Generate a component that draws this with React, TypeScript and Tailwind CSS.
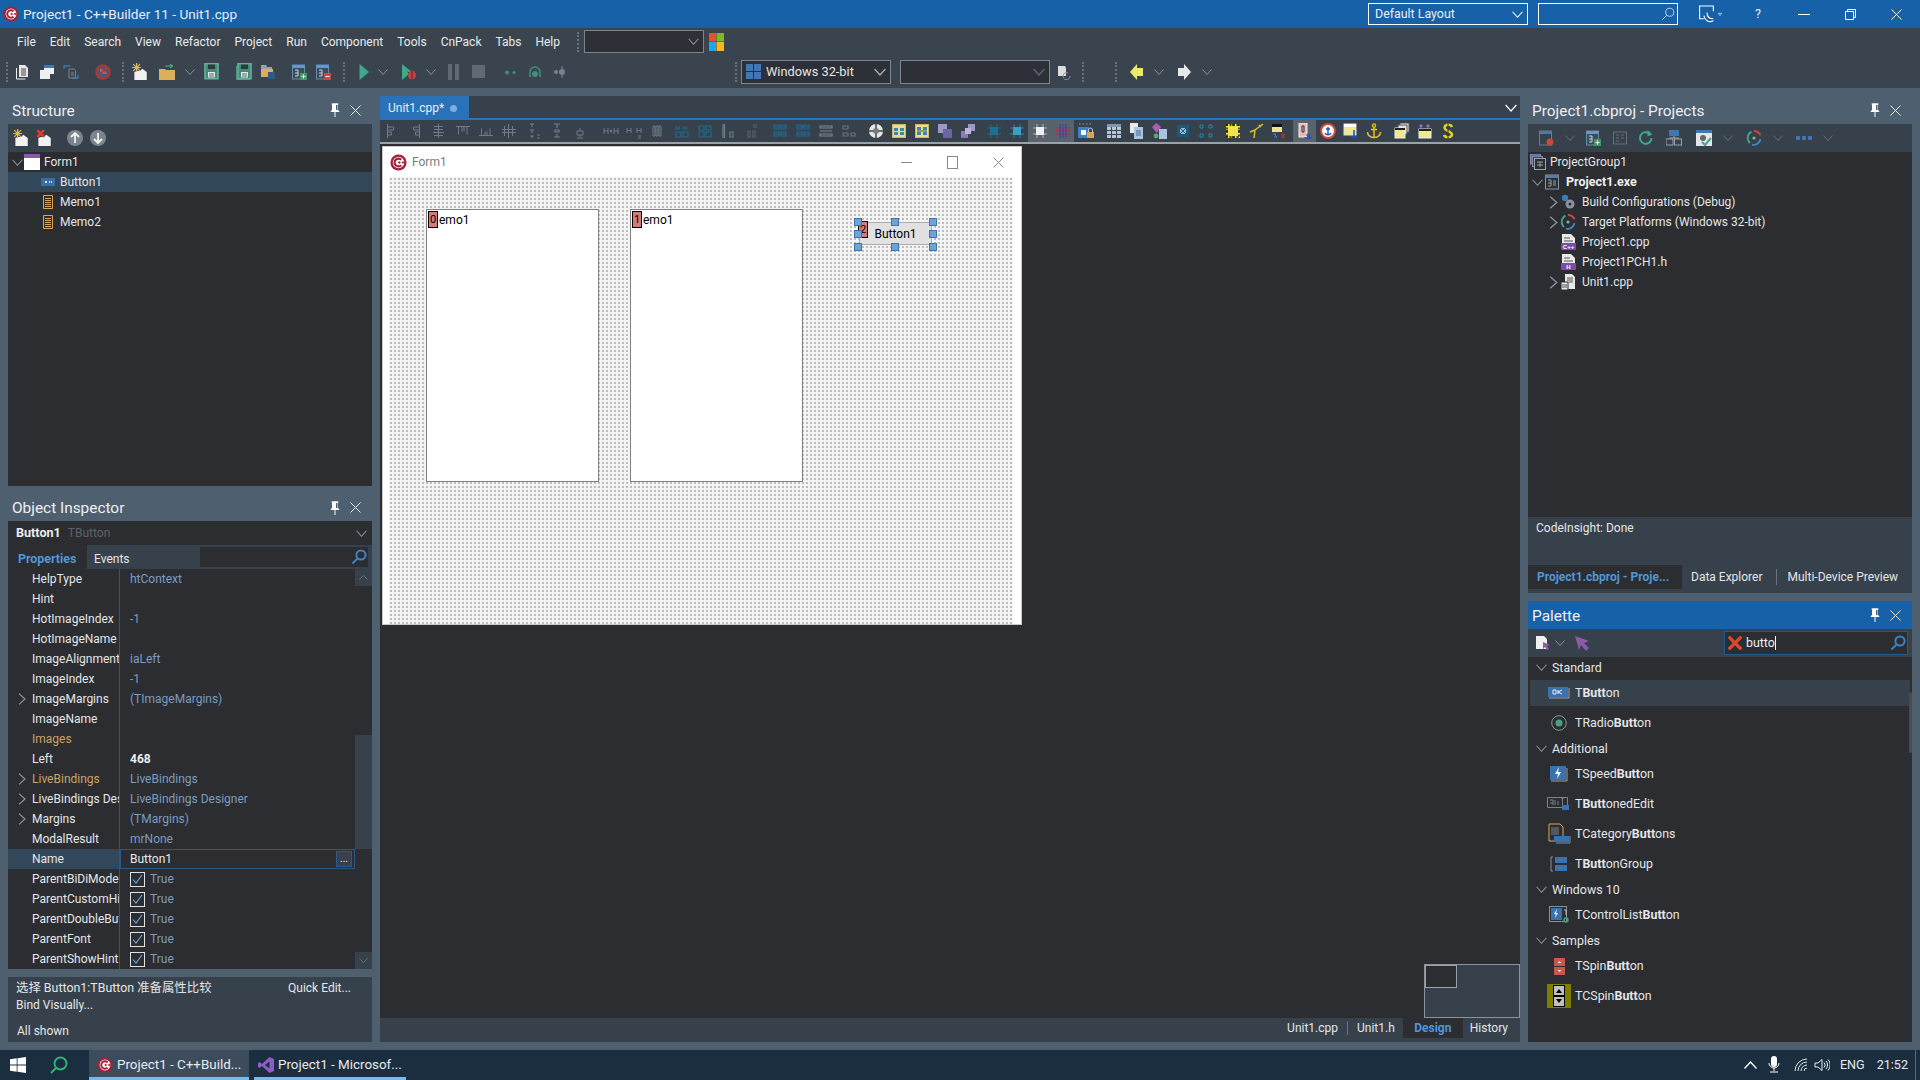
import React from "react";

type P = { children?: React.ReactNode; s?: number; c?: string };
const I = ({ children, s = 16 }: P) => (
  <svg width={s} height={s} viewBox="0 0 16 16" fill="none" className="shrink-0 block">
    {children}
  </svg>
);
const L = ({ d, c = "#76838f", w = 1 }: { d: string; c?: string; w?: number }) => (
  <I>
    <path d={d} stroke={c} strokeWidth={w} />
  </I>
);
const Chev = ({ dir = "down", c = "#8b95a0", s = 10 }: { dir?: "down" | "right" | "up"; c?: string; s?: number }) => (
  <svg width={s} height={s} viewBox="0 0 10 10" fill="none" className="shrink-0 block">
    <path d={dir === "down" ? "M0.5 2.5 5 7.5 9.5 2.5" : dir === "up" ? "M0.5 7.5 5 2.5 9.5 7.5" : "M2.5 0.5 7.5 5 2.5 9.5"} stroke={c} strokeWidth="1" />
  </svg>
);
const Dots = () => <div className="h-[20px] w-0 border-l-2 border-dotted border-[#66727d]" />;
const CLogo = ({ s = 16 }: { s?: number }) => (
  <svg width={s} height={s} viewBox="0 0 16 16" fill="none" className="shrink-0 block">
    <circle cx="8" cy="8" r="7.6" fill="#a3213a" />
    <circle cx="8" cy="8" r="5.4" fill="#fff" />
    <path d="M10.6 5.4a3.7 3.7 0 1 0 0 5.2" stroke="#a3213a" strokeWidth="2" />
    <path d="M7.5 8h2.5M8.7 6.8v2.4M11 8h2.4M12.2 6.8v2.4" stroke="#a3213a" strokeWidth="1" />
  </svg>
);
const Pin = () => (
  <svg width="12" height="14" viewBox="0 0 12 14" className="shrink-0 block" fill="none">
    <path d="M2.5 1h7M3.5 1h5v6l1.5 1.5H2L3.5 7z" fill="#fff" stroke="#fff" />
    <path d="M6 9v5" stroke="#fff" />
    <path d="M7 2v5h1.5V2z" fill="#4e5f6f" />
  </svg>
);
const X = ({ s = 11, c = "#e8eaec", w = 1 }: { s?: number; c?: string; w?: number }) => (
  <svg width={s} height={s} viewBox="0 0 11 11" fill="none" className="shrink-0 block">
    <path d="M.5.5l10 10M10.5.5l-10 10" stroke={c} strokeWidth={w} />
  </svg>
);
const Mag = ({ c = "#3f82c4", s = 16, w = 2 }: { c?: string; s?: number; w?: number }) => (
  <svg width={s} height={s} viewBox="0 0 16 16" fill="none" className="shrink-0 block">
    <circle cx="10" cy="6" r="4.6" stroke={c} strokeWidth={w} />
    <path d="M6.6 9.4 1.5 14.5" stroke={c} strokeWidth={w} />
  </svg>
);
const OkBtn = ({ w = 14, h = 8 }: { w?: number; h?: number }) => (
  <svg width={w} height={h} viewBox="0 0 14 8" className="shrink-0 block">
    <rect width="14" height="8" fill="#3a6ea5" />
    <path d="M4 3h2v2H4zM8 3h1v2H8zM10 3h1v2h-1z" fill="#cfe0f0" />
  </svg>
);
const Memo = () => (
  <svg width="10" height="14" viewBox="0 0 10 14" fill="none" className="shrink-0 block">
    <path d="M.5.5h9v13h-9z" stroke="#d9a860" />
    <path d="M2 3.5h6M2 5.5h6M2 7.5h6M2 9.5h6M2 11.5h6" stroke="#d9a860" />
  </svg>
);
const FormIcon = () => (
  <svg width="16" height="16" viewBox="0 0 16 16" className="shrink-0 block">
    <rect width="16" height="16" fill="#fff" />
    <rect width="16" height="4" fill="#8a5ca8" />
  </svg>
);
const CheckBox = () => (
  <svg width="15" height="15" viewBox="0 0 15 15" fill="none" className="shrink-0 block">
    <rect x=".5" y=".5" width="14" height="14" stroke="#dfe3e6" />
    <path d="M3 7.5 6 11l6-8" stroke="#6da6dc" strokeWidth="1.1" />
  </svg>
);
const TargetRing = ({ s = 16 }: { s?: number }) => (
  <svg width={s} height={s} viewBox="0 0 16 16" fill="none" className="shrink-0 block">
    <path d="M8 1a7 7 0 0 1 6.5 4.4" stroke="#d0453a" strokeWidth="1.8" />
    <path d="M14.5 9A7 7 0 0 1 6 14.7" stroke="#3f88c5" strokeWidth="1.8" />
    <path d="M4 13A7 7 0 0 1 5.5 1.6" stroke="#3fa387" strokeWidth="1.8" />
    <circle cx="8" cy="8" r="1.6" fill="#9aa3ab" />
  </svg>
);

/* main toolbar icons */
const TbDocs = () => (
  <I>
    <path d="M1.5 4v11h9" stroke="#eee" />
    <path d="M4 1h6l3 3v9H4z" fill="#e8e8e8" />
    <path d="M6 5h5M6 7h5M6 9h5M6 11h5" stroke="#444" />
  </I>
);
const TbWin = () => (
  <I>
    <rect x="1" y="6" width="10" height="9" fill="#f0f0f0" />
    <rect x="5" y="1" width="10" height="9" fill="#3f78b8" />
    <rect x="5" y="4" width="10" height="6" fill="#f0f0f0" />
  </I>
);
const TbTab = () => (
  <I>
    <path d="M1 5V2h6M15 11v3H9" stroke="#3f78b0" strokeWidth="1.3" />
    <path d="M6 5h5l1.5 1.5V14H6z" stroke="#76838f" />
    <path d="M8 9h3M8 11h3" stroke="#76838f" />
  </I>
);
const TbGlobe = () => (
  <svg width="18" height="18" viewBox="0 0 18 18" className="shrink-0 block" fill="none">
    <circle cx="9" cy="9" r="6.6" fill="#3a5c80" stroke="#a83a36" strokeWidth="2.4" />
    <path d="M6 5l5 3 2 3-4 0-3-2zM11 4l2 2-2 1z" fill="#c25a5a" />
    <path d="M4 13 14 4" stroke="#a83a36" strokeWidth="1.2" />
  </svg>
);
const TbNew = () => (
  <svg width="18" height="18" viewBox="0 0 16 16" fill="none" className="shrink-0 block">
    <path d="M5 7h3l2-2 4 3v7H3V8z" fill="#f2f2f2" />
    <path d="M5 0v8M1 4h8M2 1l6 6M8 1 2 7" stroke="#e4b84e" strokeWidth="1.1" />
  </svg>
);
const TbOpen = () => (
  <svg width="16" height="16" viewBox="0 0 16 16" className="shrink-0 block" fill="none">
    <path d="M0 5h6l1 1h9v10H0z" fill="#d9b15a" />
    <path d="M7 3V2h6M11 0l2.5 2L11 4" stroke="#4aa88c" strokeWidth="1.2" />
  </svg>
);
const TbSave = ({ all }: { all?: boolean }) => (
  <svg width="17" height="17" viewBox="0 0 17 17" className="shrink-0 block" fill="none">
    {all && <path d="M.6 3v13.4h13" stroke="#4fa28a" />}
    <path d="M2 .8h13v15H2z" stroke="#5fb39a" strokeWidth="1.6" fill="#47897a" />
    <rect x="5" y="1.5" width="7" height="4.5" fill="#2e3a40" />
    <rect x="5" y="9" width="7" height="5.5" fill="#dfe6e4" />
    <path d="M6 11h5M6 13h5" stroke="#666" />
  </svg>
);
const TbFolders = () => (
  <I>
    <path d="M1 1h5l1 2h5v2H1z" fill="#99a2aa" />
    <path d="M1 5h12v8H1z" fill="#d9b15a" />
    <rect x="8" y="8" width="7" height="7" fill="#2f5a86" />
  </I>
);
const TbProj = ({ c, plus }: { c: string; plus?: boolean }) => (
  <I>
    <rect x="1.5" y="1" width="12" height="14" stroke="#6b8aa8" fill="#3a4c5e" />
    <rect x="1.5" y="1" width="12" height="3" fill="#5f9ad0" />
    <path d="M4 6h3v6H4M4 9h3" stroke="#cfd6dc" />
    <rect x="9" y="9" width="7" height="7" fill={c} />
    <path d={plus ? "M10.5 12.5h4M12.5 10.5v4" : "M10.5 12.5h4"} stroke="#fff" />
  </I>
);
const Play = ({ c = "#3fa98c" }: { c?: string }) => (
  <I>
    <path d="M3.5 0 13 8l-9.5 8z" fill={c} />
  </I>
);
const TbDebug = () => (
  <I>
    <path d="M1 0 11 8 1 16z" fill="#3fa98c" />
    <ellipse cx="11" cy="11" rx="4" ry="4.6" fill="#c9403a" />
    <path d="M11 6.5v9M8 9l-1.5-1M14 9l1.5-1M7 12H6M15 12h1" stroke="#32383c" />
  </I>
);
const Step = ({ k }: { k: number }) => (
  <I>
    {k === 0 && (
      <>
        <circle cx="4" cy="8.500" r="2" fill="#3f8f7a" />
        <circle cx="11" cy="8.500" r="1.500" fill="#3f8f7a" />
      </>
    )}
    {k === 1 && (
      <>
        <path d="M3 13V8a5 5 0 0 1 10 0v5" stroke="#3f8f7a" strokeWidth="1.5" />
        <circle cx="8" cy="10" r="3" fill="#3f8f7a" />
      </>
    )}
    {k === 2 && (
      <>
        <circle cx="5" cy="8" r="2" fill="#76838f" />
        <circle cx="11" cy="8" r="3" fill="#76838f" />
        <path d="M11 2v3M11 11v3" stroke="#76838f" />
      </>
    )}
  </I>
);

/* design toolbar */
const Sq = ({ c = "#1f6e94", f }: { c?: string; f?: string }) => (
  <I>
    <path d="M1 5h14M1 11h14M5 1v14M11 1v14" stroke={c} />
    <rect x="4" y="4" width="8" height="8" fill={f || c} />
  </I>
);
const Tile = ({ c = "#e9dc8c" }: { c?: string }) => (
  <I>
    <rect x="1.5" y="1.5" width="13" height="13" fill={c} stroke="#c9bb66" />
    <path d="M3 5h4v3H3zM9 5h4v3H9zM3 9h4v3H3zM9 9h4v3H9z" fill="#3f87a8" />
  </I>
);
const Purple = ({ k }: { k: number }) => (
  <I>
    {k === 0 ? (
      <>
        <rect x="1" y="1" width="9" height="9" fill="#9c98c8" />
        <rect x="6" y="6" width="9" height="9" fill="#6c66a0" />
      </>
    ) : (
      <>
        <rect x="8" y="1" width="7" height="7" fill="#9c98c8" />
        <rect x="1" y="8" width="7" height="7" fill="#8c78b8" />
        <rect x="5" y="5" width="6" height="6" fill="#b8b4dc" />
      </>
    )}
  </I>
);
const Anchor = ({ c = "#e8c020" }: { c?: string }) => (
  <I>
    <circle cx="8" cy="2.5" r="1.6" stroke={c} strokeWidth="1.3" />
    <path d="M8 4v11M5 6.5h6M1.5 9c0 3.5 3.5 5.5 6.5 5.5s6.5-2 6.5-5.5" stroke={c} strokeWidth="1.5" />
  </I>
);
const dim = "#6f7c88";
const teal = "#1e6a90";
const groups: { ml: string; items: { n: React.ReactNode; on?: boolean }[] }[] = [
  { ml: "ml-0", items: [
    { n: <L c={dim} d="M3.5 1v14M3.5 4h6v3h-6M3.5 9h4v3h-4" /> },
    { n: <L c={dim} d="M12.5 1v14M12.5 4h-6v3h6M12.5 9h-4v3h4" /> },
    { n: <L c={dim} d="M8.5 1v14M4 3.5h9M4 6.5h9M3 9.5h11M4 12.5h9" /> } ] },
  { ml: "ml-[2px]", items: [
    { n: <L c={dim} d="M1 3.5h14M3.5 3.5v8M12 3.5v8M7 3.5v5M9 3.5v5" /> },
    { n: <L c={dim} d="M1 12.5h14M3.5 12.5v-7M12 12.5v-7M7 12.5v-4M9 12.5v-4" /> },
    { n: <L c={dim} d="M1 6.5h14M1 9.5h14M3.5 3v10M7.5 1v14M11.5 3v10" /> } ] },
  { ml: "ml-[2px]", items: [
    { n: <L c={dim} d="M4 1h4M6 1v3M4 7h4M6 7v3M4 13h4M6 13v2M11 12h3M11 15h3" w={1.2} /> },
    { n: <L c={dim} d="M5 1h6M8 1v4M6 7h4v2H6zM5 14h6M8 11v3" w={1.2} /> },
    { n: <L c={dim} d="M5 8h6v4H5zM8 5v3M8 12v2M5 15h6" /> } ] },
  { ml: "ml-[8px]", items: [
    { n: <L c={dim} d="M1 5v6M5 5v6M11 5v6M15 5v6M1 8h4M11 8h4M7.5 7h1v2h-1z" /> },
    { n: <L c={dim} d="M1 5v5M5 5v5M11 5v5M15 5v5M1 7.5h4M11 7.5h4M12 13h3M12 15h3" /> },
    { n: <L c={dim} d="M4 3h2v10H4zM7 3h2v10H7zM10 3h2v10h-2z" /> } ] },
  { ml: "ml-[2px]", items: [
    { n: <L c={teal} d="M2 3v4M2 5h3M5 3v4M11 3v4M8 5h6M2 9h5v5H2zM9 9h5v5H9z" w={1.2} /> },
    { n: <L c={teal} d="M2 3h5v4H2zM9 3h5v4H9zM2 9h5v5H2zM9 9h5v5H9z" w={1.2} /> },
    { n: <L c="#6f7c88" d="M3 1v14M4.5 1v14M10 9h3v5h-3z" w={1.2} /> },
    { n: <L c="#565f68" d="M11 1v4M13 1v4M5 8h2v6H5zM10 8h2v6h-2z" w={1.2} /> } ] },
  { ml: "ml-[6px]", items: [
    { n: <L c={teal} d="M2 2h5v4H2zM9 2h5v4H9zM2 9h5v4H2zM9 9h5v4H9zM2 4h12M2 11h12" w={1.2} /> },
    { n: <L c={teal} d="M2 2h5v4H2zM9 2h5v4H9zM2 9h5v4H2zM9 9h5v4H9zM2 4h12M2 11h12" w={1.2} /> },
    { n: <L c="#7c8790" d="M2 3h12v2H2zM2 11h12v2H2zM2 8h12" w={1.2} /> },
    { n: <L c="#6a747d" d="M2 3h5v3H2zM2 10h5v3H2zM10 10h4v3h-4z" w={1.2} /> } ] },
  { ml: "ml-[4px]", items: [
    { n: <I><circle cx="8" cy="8" r="7" fill="#e8e8e8" /><path d="M8 0v16M0 8h16" stroke="#3a444e" strokeWidth="1.5" /><rect x="5.5" y="5.5" width="5" height="5" fill="#7a7a7a" /></I> },
    { n: <Tile /> },
    { n: <I><rect x="1.5" y="1.5" width="13" height="13" fill="#e9dc8c" stroke="#c9bb66" /><path d="M3 8h10" stroke="#2c5a70" /><path d="M3 4h4v3H3zM9 4h4v3H9zM3 9h4v3H3zM9 9h4v3H9z" fill="#3f87a8" /></I> },
    { n: <Purple k={0} /> },
    { n: <Purple k={1} /> } ] },
  { ml: "ml-[3px]", items: [
    { n: <Sq /> },
    { n: <Sq c="#2a86a8" f="#3a9fc0" /> },
    { n: <Sq c="#aeb8bf" f="#f0f0f0" />, on: true },
    { n: <I><path d="M1 5h14M1 8h14M1 11h14" stroke="#c02a3a" /><path d="M8 1v14M5 1v14M11 1v14" stroke="#2a40c0" /></I>, on: true },
    { n: <I><path d="M1 1h13" stroke="#9aa" strokeDasharray="1.5 2" /><rect x="0" y="4" width="11" height="11" fill="#3f82c4" /><rect x="3" y="7" width="5" height="5" fill="#fff" /><rect x="9" y="9" width="7" height="6" fill="#d9a84e" /><path d="M10.5 9V7a2 2 0 0 1 4 0v2" stroke="#c8c8c8" /></I> } ] },
  { ml: "ml-[5px]", items: [
    { n: <I><rect x="1" y="1" width="14" height="14" fill="#b4c6d8" /><rect x="1" y="1" width="14" height="3" fill="#7d97b0" /><path d="M5.5 4v11M10.5 4v11M1 7.5h14M1 11.5h14" stroke="#3a444e" /></I> },
    { n: <I><rect x="1" y="0" width="8" height="10" fill="#e8e8e8" /><rect x="5" y="4" width="9" height="12" fill="#a8c4e0" /><path d="M7 8h5M7 10h5M7 12h5" stroke="#4a6c90" /></I> },
    { n: <I><path d="M4.5 0 9 4 4.5 10 0 4z" fill="#b05cb0" /><rect x="7" y="6" width="8" height="10" fill="#a8c4e0" /><circle cx="4" cy="13" r="2.4" fill="#5aa86a" /></I> },
    { n: <I><rect x="2" y="2" width="12" height="12" fill="#1a5a78" /><rect x="5" y="5" width="6" height="6" fill="#9ab8d0" /><path d="M5 5l6 6M11 5l-6 6" stroke="#1a5a78" /></I> },
    { n: <L c="#2a86a8" d="M2 2h3v3H2zM11 2h3v3h-3zM2 11h3v3H2zM11 11h3v3h-3z" /> } ] },
  { ml: "ml-[4px]", items: [
    { n: <I><rect x="1" y="1" width="14" height="14" fill="#f0e24a" /><path d="M1 2h14M1 14h14M2 1v14M14 1v14M8 1v2M8 13v2M1 8h2M13 8h2" stroke="#111" strokeWidth="1.4" strokeDasharray="2 1.5" /></I> },
    { n: <L c="#d8c030" w={1.5} d="M15 1 7 7M7 7l-5 2M7 7l-1 8M11 2l2 2" /> },
    { n: <I><rect x="1" y="1" width="10" height="8" fill="#efe38a" /><rect x="1" y="1" width="10" height="3" fill="#111" /><path d="M3 11l3 3M3 14h3M2 11h3" stroke="#3f82c4" /><path d="M10 11l4 4M14 11l-4 4M12 10v6" stroke="#c03030" /></I> } ] },
  { ml: "ml-[3px]", items: [
    { n: <I><rect x="2" y="0" width="8" height="14" fill="#e8b8b8" stroke="#eee" /><path d="M5 3h2v6H5z" stroke="#333" /><circle cx="11" cy="12" r="1.2" stroke="#1a50c0" /><path d="M11 12v4M8 14c0 1.5 6 1.5 6 0" stroke="#1a50c0" strokeWidth="1.3" /></I>, on: true },
    { n: <I><circle cx="8" cy="8" r="7" fill="#fff" stroke="#d04838" strokeWidth="2" /><path d="M8 4v8M6 6h4M5 10c1 2.5 5 2.5 6 0" stroke="#1a50c0" strokeWidth="1.4" /></I> },
    { n: <I><rect x="1" y="1" width="12" height="11" fill="#f0e890" stroke="#ddd" /><rect x="1" y="1" width="12" height="3" fill="#fff" /><path d="M11 7v8M8 13c1 2 5 2 6 0" stroke="#1a50c0" strokeWidth="1.5" /></I> },
    { n: <Anchor /> } ] },
  { ml: "ml-[5px]", items: [
    { n: <I><rect x="6" y="0" width="9" height="9" fill="#e8e8e8" stroke="#555" /><rect x="4" y="2" width="9" height="9" fill="#ddd" stroke="#555" /><rect x="1" y="5" width="10" height="10" fill="#f0e890" stroke="#eee" /><rect x="1" y="5" width="10" height="2" fill="#222" /></I> },
    { n: <I><path d="M4 1l2 2-2 2-2-2zM11 1l2 2-2 2-2-2z" fill="#9a6ac8" /><rect x="2" y="6" width="12" height="9" fill="#f0e890" stroke="#eee" /><rect x="2" y="6" width="12" height="2" fill="#222" /></I> },
    { n: <I><path d="M12 4C11 1 5 1 4.5 4.5 4 8 12 8 12 11.500 12 15 5 15 4 12" stroke="#e0d030" strokeWidth="2.4" /><path d="M8 0v16" stroke="#2a3a20" /></I> } ] },
];
const DesignBar = () => (
  <div className="h-[22px] flex items-stretch bg-[#37414b]">
    {groups.map((g, i) => (
      <div key={i} className={`flex ${g.ml}`}>
        {g.items.map((it, j) => (
          <div key={j} className={`w-[23px] flex items-center justify-center ${it.on ? "bg-[#59636c]" : ""}`}>
            {it.n}
          </div>
        ))}
      </div>
    ))}
  </div>
);

const TitleBar = () => (
  <div className="h-[28px] shrink-0 flex items-center bg-[#1761a8] text-[#e8eef4]">
    <div className="ml-[3px]"><CLogo /></div>
    <span className="ml-[4px] text-[13.6px] whitespace-nowrap">Project1 - C++Builder 11 - Unit1.cpp</span>
    <div className="ml-auto h-[22px] w-[160px] border border-white flex items-center justify-between pl-[6px] pr-[4px] text-[12.4px]">
      <span>Default Layout</span>
      <Chev c="#fff" s={11} />
    </div>
    <div className="ml-[10px] h-[22px] w-[140px] border border-white flex items-center justify-end pr-[2px]">
      <Mag c="#cfdbe6" s={14} w={1} />
    </div>
    <div className="ml-[20px] w-[24px] flex items-center gap-[2px]">
      <svg width="18" height="19" viewBox="0 0 16 18" fill="none" className="shrink-0">
        <path d="M5 13H1V1h13v5M14 15c-4 2-8 0-9-5" stroke="#fff" />
        <path d="M8 7c0 4 2 6 6 6" stroke="#fff" />
      </svg>
      <svg width="7" height="5" viewBox="0 0 7 5" fill="none"><path d="M.5.5h6L3.500 4.500z" stroke="#fff" /></svg>
    </div>
    <span className="ml-[31px] w-[10px] text-center text-[12.6px]">?</span>
    <div className="ml-[35px] w-[12px] h-px bg-white" />
    <svg className="ml-[35px]" width="11" height="11" viewBox="0 0 11 11" fill="none"><path d="M.5 2.500h8v8h-8zM2.500 2.500v-2h8v8h-2" stroke="#fff" /></svg>
    <div className="ml-[35px] mr-[18px]"><X c="#fff" /></div>
  </div>
);

const MenuRow = () => (
  <div className="h-[29px] flex items-center pl-[17px] pb-[2px] text-[12px] text-[#e8eaec]">
    <div className="flex gap-[14px]">
      {["File", "Edit", "Search", "View", "Refactor", "Project", "Run", "Component", "Tools", "CnPack", "Tabs", "Help"].map((m) => (
        <span key={m}>{m}</span>
      ))}
    </div>
    <div className="ml-[17px]"><Dots /></div>
    <div className="ml-[5px] w-[120px] h-[23px] border border-[#79848e] flex items-center justify-end pr-[4px] bg-[#2d3036]">
      <Chev s={11} />
    </div>
    <svg className="ml-[5px]" width="15" height="18" viewBox="0 0 15 18">
      <rect width="7" height="8.500" fill="#e8502a" />
      <rect x="7.500" width="7.500" height="8.500" fill="#7cb82a" />
      <rect y="9" width="7" height="9" fill="#1ea8e8" />
      <rect x="7.500" y="9" width="7.500" height="9" fill="#f8b81a" />
    </svg>
  </div>
);
const ToolRow = () => (
  <div className="h-[31px] flex items-center pb-[2px]">
    <div className="ml-[6px]"><Dots /></div>
    <div className="ml-[7px]"><TbDocs /></div>
    <div className="ml-[8px]"><TbWin /></div>
    <div className="ml-[8px]"><TbTab /></div>
    <div className="ml-[15px]"><TbGlobe /></div>
    <div className="ml-[10px]"><Dots /></div>
    <div className="ml-[7px]"><TbNew /></div>
    <div className="ml-[10px]"><TbOpen /></div>
    <div className="ml-[10px]"><Chev /></div>
    <div className="ml-[8px]"><TbSave /></div>
    <div className="ml-[16px]"><TbSave all /></div>
    <div className="ml-[7px]"><TbFolders /></div>
    <div className="ml-[15px]"><TbProj c="#3f9a6a" plus /></div>
    <div className="ml-[8px]"><TbProj c="#c84a3a" /></div>
    <div className="ml-[12px]"><Dots /></div>
    <div className="ml-[11px]"><Play /></div>
    <div className="ml-[6px]"><Chev /></div>
    <div className="ml-[13px]"><TbDebug /></div>
    <div className="ml-[9px]"><Chev /></div>
    <div className="ml-[12px] flex gap-[3px]"><div className="w-[4px] h-[16px] bg-[#5f6a74]" /><div className="w-[4px] h-[16px] bg-[#5f6a74]" /></div>
    <div className="ml-[13px] w-[13px] h-[13px] bg-[#5f6a74]" />
    <div className="ml-[18px]"><Step k={0} /></div>
    <div className="ml-[8px]"><Step k={1} /></div>
    <div className="ml-[8px]"><Step k={2} /></div>
    <div className="ml-[168px]"><Dots /></div>
    <div className="ml-[4px] w-[150px] h-[24px] border border-[#7b8791] bg-[#2d3036] flex items-center pl-[4px] pr-[4px] text-[12.8px]">
      <svg width="15" height="15" viewBox="0 0 15 15"><path d="M0 0h7v7H0zM8 0h7v7H8zM0 8h7v7H0zM8 8h7v7H8z" fill="#3f78b4" /></svg>
      <span className="ml-[5px]">Windows 32-bit</span>
      <div className="ml-auto"><Chev s={12} c="#a8b0b8" /></div>
    </div>
    <div className="ml-[9px] w-[150px] h-[24px] border border-[#7b8791] bg-[#2d3036] flex items-center justify-end pr-[4px]">
      <Chev s={12} c="#5e6a75" />
    </div>
    <div className="ml-[7px]">
      <svg width="14" height="16" viewBox="0 0 14 16" fill="none"><path d="M1 2h7l1 2v8H1z" fill="#ddd" /><path d="M13 12a3.500 3.500 0 1 1-2-3" stroke="#8a959f" /></svg>
    </div>
    <div className="ml-[11px]"><Dots /></div>
    <div className="ml-[31px]"><Dots /></div>
    <svg className="ml-[13px]" width="13" height="16" viewBox="0 0 13 16"><path d="M7 0v4h6v8H7v4L0 8z" fill="#ece86a" /></svg>
    <div className="ml-[11px]"><Chev /></div>
    <svg className="ml-[14px]" width="13" height="16" viewBox="0 0 13 16"><path d="M6 0v4H0v8h6v4l7-8z" fill="#e8e8e8" /></svg>
    <div className="ml-[11px]"><Chev /></div>
  </div>
);

const PanelHead = ({ t, blue, h = "h-[28px]" }: { t: string; blue?: boolean; h?: string }) => (
  <div className={`${h} shrink-0 flex items-center pl-[4px] ${blue ? "bg-[#1761a8]" : ""}`}>
    <span className={`text-[15.4px] text-[#eef0f2] whitespace-nowrap ${h === "h-[28px]" ? "pt-[1px]" : ""}`}>{t}</span>
    <div className="ml-auto"><Pin /></div>
    <div className="ml-[9px] mr-[11px]"><X /></div>
  </div>
);

const Structure = () => (
  <div className="h-[390px] shrink-0 flex flex-col">
    <PanelHead t="Structure" />
    <div className="h-[28px] shrink-0 bg-[#37414b] flex items-center">
      <div className="ml-[4px]"><TbNew /></div>
      <div className="ml-[5px]">
        <svg width="18" height="18" viewBox="0 0 16 16" fill="none" className="shrink-0 block">
          <path d="M5 7h3l2-2 4 3v7H3V8z" fill="#f2f2f2" />
          <path d="M2 1l6 6M8 1 2 7" stroke="#d8402f" strokeWidth="2.2" />
        </svg>
      </div>
      {["M8 3v10M4 7l4-4 4 4", "M8 3v10M4 9l4 4 4-4"].map((d, i) => (
        <div key={i} className={i === 0 ? "ml-[14px]" : "ml-[7px]"}>
          <svg width="16" height="16" viewBox="0 0 16 16" fill="none">
            <circle cx="8" cy="8" r="8" fill="#7d858c" />
            <path d={d} stroke="#f0f0f0" strokeWidth="1.8" />
          </svg>
        </div>
      ))}
    </div>
    <div className="flex-1 bg-[#2b2d31]">
      <div className="h-[20px] flex items-center pl-[4px]">
        <Chev s={11} /><div className="ml-[1px]"><FormIcon /></div><span className="ml-[4px]">Form1</span>
      </div>
      <div className="h-[20px] flex items-center pl-[33px] bg-[#33475a]"><OkBtn /><span className="ml-[5px]">Button1</span></div>
      <div className="h-[20px] flex items-center pl-[35px]"><Memo /><span className="ml-[7px]">Memo1</span></div>
      <div className="h-[20px] flex items-center pl-[35px]"><Memo /><span className="ml-[7px]">Memo2</span></div>
    </div>
  </div>
);

const props: [string, string, ("v" | "o" | "b" | "c" | "n")?, boolean?][] = [
  ["HelpType", "htContext"], ["Hint", ""], ["HotImageIndex", "-1"], ["HotImageName", ""],
  ["ImageAlignment", "iaLeft"], ["ImageIndex", "-1"], ["ImageMargins", "(TImageMargins)", "v", true],
  ["ImageName", ""], ["Images", "", "o"], ["Left", "468", "b"], ["LiveBindings", "LiveBindings", "o", true],
  ["LiveBindings Designer", "LiveBindings Designer", "v", true], ["Margins", "(TMargins)", "v", true],
  ["ModalResult", "mrNone"], ["Name", "Button1", "n"], ["ParentBiDiMode", "True", "c"],
  ["ParentCustomHint", "True", "c"], ["ParentDoubleBuffered", "True", "c"], ["ParentFont", "True", "c"], ["ParentShowHint", "True", "c"],
];

const Inspector = () => (
  <div className="flex-1 min-h-0 flex flex-col mt-[8px]">
    <PanelHead t="Object Inspector" h="h-[27px]" />
    <div className="h-[24px] shrink-0 bg-[#2b2d31] flex items-center pl-[8px]">
      <span className="font-bold text-[12.6px] text-[#eceef0]">Button1</span>
      <span className="ml-[7px] text-[#5d636a]">TButton</span>
      <div className="ml-auto mr-[5px]"><Chev s={11} /></div>
    </div>
    <div className="h-[24px] shrink-0 bg-[#37414b] flex">
      <div className="w-[79px] bg-[#2b2d31] flex items-center pl-[10px] pt-[3px] font-bold text-[12.4px] text-[#4f97d8]">Properties</div>
      <div className="w-[113px] flex items-center pl-[7px] pt-[3px]">Events</div>
      <div className="w-[168px] h-[20px] mt-[2px] bg-[#2b2d31] flex items-center justify-end pr-[1px]"><Mag /></div>
    </div>
    <div className="h-[400px] shrink-0 bg-[#2b2d31] flex">
      <div className="flex-1">
        {props.map(([n, v, k, exp]) => (
          <div key={n} className="h-[20px] flex">
            <div className={`relative w-[112px] shrink-0 flex items-center border-r border-[#4a5058] pl-[24px] overflow-hidden whitespace-nowrap ${k === "n" ? "bg-[#33475a]" : ""} ${k === "o" ? "text-[#c9a466]" : ""}`}>
              {exp && <div className="absolute left-[8px] top-[4px]"><Chev dir="right" s={12} /></div>}
              {n}
            </div>
            {k === "n" ? (
              <div className="flex-1 border border-[#2a5a8c] flex items-center pl-[9px] text-[#e8eaec]">
                {v}
                <div className="ml-auto mr-[2px] w-[16px] h-[16px] bg-[#37414b] border border-[#2a5a8c] flex items-center justify-center text-[10px] leading-none">...</div>
              </div>
            ) : k === "c" ? (
              <div className="flex items-center pl-[10px] text-[#7c9cc0]"><CheckBox /><span className="ml-[5px]">{v}</span></div>
            ) : (
              <div className={`pl-[10px] flex items-center whitespace-nowrap ${k === "b" ? "font-bold text-[#eceef0]" : "text-[#7c9cc0]"}`}>{v}</div>
            )}
          </div>
        ))}
      </div>
      <div className="w-[17px] shrink-0 flex flex-col">
        <div className="h-[17px] bg-[#37414b] flex items-center justify-center"><Chev dir="up" s={9} c="#69737d" /></div>
        <div className="h-[149px]" />
        <div className="h-[114px] bg-[#37414b]" />
        <div className="flex-1" />
        <div className="h-[17px] bg-[#37414b] flex items-center justify-center"><Chev s={9} c="#69737d" /></div>
      </div>
    </div>
    <div className="mt-[8px] flex-1 bg-[#37414b] flex flex-col pl-[8px] pt-[3px]">
      <div className="flex items-center h-[16px] pr-[21px]">
        <span className="whitespace-nowrap text-[12.4px]">选择 Button1:TButton 准备属性比较</span>
        <span className="ml-auto">Quick Edit...</span>
      </div>
      <div className="h-[16px] mt-[1px] flex items-center">Bind Visually...</div>
      <div className="mt-[10px] pl-[1px]">All shown</div>
    </div>
  </div>
);

const Pal = ({ icon, a, b, c, sel }: { icon: React.ReactNode; a: string; b: string; c: string; sel?: boolean }) => (
  <div className="h-[30px] flex items-center px-[2px]">
    <div className={`w-full h-[26px] flex items-center pl-[17px] ${sel ? "bg-[#37414b]" : ""}`}>
      <div className="w-[24px] h-[24px] flex items-center justify-center shrink-0">{icon}</div>
      <span className="ml-[4px] text-[12.4px] whitespace-nowrap">{a}<b className="font-bold">{b}</b>{c}</span>
    </div>
  </div>
);
const PalHead = ({ t }: { t: string }) => (
  <div className="h-[21px] flex items-center pl-[8px]">
    <Chev s={11} /><span className="ml-[5px] text-[12.4px]">{t}</span>
  </div>
);
const OkIcon = () => (
  <svg width="22" height="12" viewBox="0 0 22 12" className="shrink-0">
    <rect width="20" height="10" fill="#3a72ae" />
    <path d="M1 11h20V1" stroke="#9aa3ab" fill="none" />
    <path d="M5 3h3v4H5zM10 3v4M14 3l-4 2 4 2" stroke="#e8eef4" fill="none" />
  </svg>
);
const Speed = () => (
  <svg width="18" height="16" viewBox="0 0 18 16" className="shrink-0">
    <rect width="16" height="14" fill="#3a72ae" />
    <path d="M1 15h16V2" stroke="#9aa3ab" fill="none" />
    <path d="M9 1 5 8h3l-1 5 4-7H8z" fill="#fff" />
  </svg>
);

const Palette = () => (
  <div className="flex-1 min-h-0 flex flex-col mt-[8px]">
    <PanelHead t="Palette" blue />
    <div className="h-[28px] shrink-0 bg-[#37414b] flex items-center">
      <svg className="ml-[7px]" width="16" height="16" viewBox="0 0 16 16">
        <path d="M1 1h8l3 3v10H1z" fill="#f0f0f0" />
        <path d="M8 7l7 3-3 1 2 3-2 1-2-3-2 2z" fill="#8a5ca8" />
      </svg>
      <div className="ml-[4px]"><Chev /></div>
      <svg className="ml-[10px]" width="15" height="15" viewBox="0 0 15 15"><path d="M0 0l14 5-5 2 5 5-3 3-5-6-2 5z" fill="#8a5ca8" /></svg>
      <div className="ml-auto mr-[4px] w-[184px] h-[24px] border border-[#1e5a94] bg-[#2b2d31] flex items-center pl-[3px] pr-[1px]">
        <X s={14} c="#d8492f" w={2.6} />
        <span className="ml-[4px] text-[12.4px] text-[#eceef0]">butto</span>
        <div className="w-px h-[14px] bg-white" />
        <div className="ml-auto"><Mag /></div>
      </div>
    </div>
    <div className="flex-1 bg-[#2b2d31] relative">
      <PalHead t="Standard" />
      <Pal sel icon={<OkIcon />} a="T" b="Butt" c="on" />
      <Pal icon={<svg width="16" height="16" viewBox="0 0 16 16" fill="none"><circle cx="8" cy="8" r="7.300" stroke="#8b95a0" /><circle cx="8" cy="8" r="3.500" fill="#48a080" /></svg>} a="TRadio" b="Butt" c="on" />
      <PalHead t="Additional" />
      <Pal icon={<Speed />} a="TSpeed" b="Butt" c="on" />
      <Pal icon={<svg width="24" height="16" viewBox="0 0 24 16" fill="none"><path d="M.5 1.500h20v10H.5z" stroke="#7a848d" /><path d="M3 4h3v5M3 7h3M8 4v5M11 5v4M14 2h3M15.500 2v7" stroke="#7a848d" /><rect x="15" y="9" width="7" height="5" fill="#3a72ae" /></svg>} a="T" b="Butt" c="onedEdit" />
      <Pal icon={<svg width="24" height="22" viewBox="0 0 24 22" fill="none"><path d="M2 1h11l3 3v14H2z" stroke="#d9a860" /><path d="M4 5h8M4 7h8M4 9h8M4 11h8" stroke="#7a848d" /><rect x="7" y="13" width="15" height="6" fill="#3a72ae" /><path d="M9 20h14v-7" stroke="#8a939b" /></svg>} a="TCategory" b="Butt" c="ons" />
      <Pal icon={<svg width="18" height="16" viewBox="0 0 18 16" fill="none"><path d="M3 1H1v14h2" stroke="#8a939b" /><rect x="5" y="1" width="12" height="6" fill="#3a72ae" /><rect x="5" y="9" width="12" height="6" fill="#3a72ae" /></svg>} a="T" b="Butt" c="onGroup" />
      <PalHead t="Windows 10" />
      <Pal icon={<svg width="20" height="18" viewBox="0 0 20 18" fill="none"><rect x=".500" y=".500" width="17" height="15" stroke="#8a939b" /><rect x="2" y="2" width="11" height="12" fill="#3a72ae" /><path d="M8 3 5 8h2l-1 4 3-5H7z" fill="#fff" /><path d="M15 4h2v5" stroke="#bbb" /><circle cx="17" cy="14" r="2" stroke="#48a080" strokeWidth="1.500" /></svg>} a="TControlList" b="Butt" c="on" />
      <PalHead t="Samples" />
      <Pal icon={<svg width="11" height="17" viewBox="0 0 11 17"><rect width="11" height="8" fill="#c8584c" /><rect y="9" width="11" height="8" fill="#c8584c" /><path d="M3.500 5l2-2 2 2zM3.500 12l2 2 2-2z" fill="#f0e0e0" /></svg>} a="TSpin" b="Butt" c="on" />
      <Pal icon={<svg width="24" height="24" viewBox="0 0 24 24"><rect width="24" height="24" fill="#7e7e00" /><rect x="6" y="1" width="12" height="22" fill="#000" /><rect x="7" y="2" width="10" height="9" fill="#c0c0c0" /><rect x="7" y="13" width="10" height="9" fill="#c0c0c0" /><path d="M9 9l3-4 3 4zM9 15l3 4 3-4z" fill="#000" /></svg>} a="TCSpin" b="Butt" c="on" />
      <div className="absolute right-0 top-[35px] w-[3px] h-[61px] rounded bg-[#4a4d50]" />
    </div>
  </div>
);

const TbProjGray = () => (
  <I>
    <rect x="1.500" y="1" width="13" height="14" stroke="#8895a0" />
    <rect x="1.500" y="1" width="13" height="3" fill="#5a7d9f" />
    <path d="M4 6h3v6H4M4 9h3M9 7h3M9 9h3M9 11h3" stroke="#9aa3ab" />
  </I>
);

const ProjectsPanel = () => {
  const miniDoc = (c: string, t: string) => (
    <svg width="15" height="16" viewBox="0 0 15 16">
      <path d="M1 0h9l4 4v6H1z" fill="#e8e8e8" />
      <path d="M3 4h6M3 7h9" stroke="#555" />
      <rect y="9" width="15" height="7" rx="1" fill={c} />
      <text x="7.500" y="15" textAnchor="middle" fontSize="6" fontWeight="700" fill="#fff" fontFamily="Liberation Sans">{t}</text>
    </svg>
  );
  const rows: { ml: string; chev?: "down" | "right"; icon: React.ReactNode; text: string; bold?: boolean }[] = [
    { ml: "ml-[3px]", chev: "down", text: "Project1.exe", bold: true, icon: <TbProjGray /> },
    { ml: "ml-[19px]", chev: "right", text: "Build Configurations (Debug)", icon: <I><circle cx="5" cy="4" r="3.200" fill="#3f78b4" /><circle cx="10" cy="10" r="4.500" fill="#8a939b" /><circle cx="10" cy="10" r="1.500" fill="#2b2d31" /></I> },
    { ml: "ml-[19px]", chev: "right", text: "Target Platforms (Windows 32-bit)", icon: <TargetRing /> },
    { ml: "ml-[19px]", text: "Project1.cpp", icon: miniDoc("#7a4ea0", "C++") },
    { ml: "ml-[19px]", text: "Project1PCH1.h", icon: miniDoc("#7a4ea0", "H") },
    { ml: "ml-[19px]", chev: "right", text: "Unit1.cpp", icon: <I><path d="M5 0h7l3 3v12H5z" fill="#e8e8e8" /><path d="M7 4h6M7 6h6M9 8h4" stroke="#555" /><rect x="1" y="8" width="7" height="8" fill="#e8e8e8" stroke="#2b2d31" /><path d="M2 11h5M2 13h5" stroke="#555" /></I> },
  ];
  return (
    <div className="h-[497px] shrink-0 flex flex-col">
      <PanelHead t="Project1.cbproj - Projects" />
      <div className="h-[28px] shrink-0 bg-[#37414b] flex items-center">
        <div className="ml-[10px]"><I><rect x="1.500" y="1" width="12" height="14" stroke="#6b7c8c" /><rect x="1.500" y="1" width="12" height="3" fill="#4a7ab0" /><circle cx="12" cy="12" r="3.500" fill="#c84a3a" /></I></div>
        <div className="ml-[11px]"><Chev c="#66717c" /></div>
        <div className="ml-[10px]"><TbProj c="#3f9a6a" plus /></div>
        <div className="ml-[11px]"><I><rect x="1.500" y="2" width="13" height="12" stroke="#66717c" /><path d="M4 5h3M4 8h3M4 11h3M9 5h3M9 8h3" stroke="#66717c" /></I></div>
        <div className="ml-[10px]"><svg width="16" height="16" viewBox="0 0 16 16" fill="none"><path d="M13.500 8A5.800 5.800 0 1 1 11 3.200" stroke="#3fa98c" strokeWidth="2" /><path d="M9.500 0v6.500l5-2z" fill="#3fa98c" /></svg></div>
        <div className="ml-[12px]"><I><rect x="3" y="0" width="10" height="6" fill="#3f78b4" /><path d="M8 6v2M3 8h10" stroke="#aab" /><rect x="0" y="9" width="7" height="6" stroke="#9aa3ab" /><rect x="8.500" y="9" width="7" height="6" stroke="#9aa3ab" /></I></div>
        <div className="ml-[14px]"><I><rect x="0" y="0" width="16" height="16" fill="#e4e6e8" /><rect x="0" y="0" width="16" height="3" fill="#3f78b4" /><circle cx="7" cy="8" r="3" fill="#666" /><path d="M6 12l3 3 6-7" stroke="#3fa98c" strokeWidth="2" /></I></div>
        <div className="ml-[11px]"><Chev c="#66717c" /></div>
        <div className="ml-[13px]"><TargetRing /></div>
        <div className="ml-[11px]"><Chev c="#66717c" /></div>
        <div className="ml-[13px] flex gap-[2px]">{[0, 1, 2].map((i) => <div key={i} className="w-[4px] h-[4px] bg-[#3f78b4] rounded-[1px]" />)}</div>
        <div className="ml-[11px]"><Chev c="#66717c" /></div>
      </div>
      <div className="h-[365px] shrink-0 bg-[#2b2d31]">
        <div className="h-[20px] flex items-center pl-[2px]">
          <svg width="16" height="16" viewBox="0 0 16 16" fill="none"><rect x=".500" y="0" width="10" height="10" fill="#3f78b4" stroke="#88a" /><rect x="2.500" y="2.500" width="10" height="10" fill="#37414b" stroke="#88a" /><rect x="4.500" y="4.500" width="11" height="11" fill="#2b2d31" stroke="#9aa3ab" /><path d="M7 8h6M7 11h6M10 8v5" stroke="#9aa3ab" /></svg>
          <span className="ml-[4px]">ProjectGroup1</span>
        </div>
        {rows.map((r) => (
          <div key={r.text} className="h-[20px] flex items-center">
            <div className={`${r.ml} w-[12px] flex justify-center`}>{r.chev && <Chev dir={r.chev} s={r.chev === "down" ? 11 : 13} />}</div>
            <div className="w-[18px] flex justify-center">{r.icon}</div>
            <span className={`ml-[5px] whitespace-nowrap ${r.bold ? "font-bold text-[12.5px] text-[#f0f0f0]" : ""}`}>{r.text}</span>
          </div>
        ))}
      </div>
      <div className="flex-1 bg-[#37414b] flex flex-col">
        <div className="pl-[8px] pt-[3px] h-[48px]">CodeInsight: Done</div>
        <div className="h-[24px] flex items-center">
          <div className="w-[154px] h-full bg-[#2b2d31] flex items-center pl-[9px] font-bold text-[#4f97d8] whitespace-nowrap">Project1.cbproj - Proje...</div>
          <span className="ml-[9px] whitespace-nowrap">Data Explorer</span>
          <div className="ml-[13px] w-px h-[16px] bg-[#6a747d]" />
          <span className="ml-[11px] whitespace-nowrap">Multi-Device Preview</span>
        </div>
        <div className="flex-1" />
      </div>
    </div>
  );
};

const Handle = ({ cls }: { cls: string }) => (
  <div className={`absolute w-[8px] h-[8px] bg-[#6fa3d8] border border-[#3f73aa] ${cls}`} />
);
const Tag = ({ n, cls }: { n: string; cls: string }) => (
  <div className={`absolute w-[10px] h-[17px] bg-[#d97a7a] border border-black flex items-center justify-center text-[11px] text-black leading-none ${cls}`}>
    {n}
  </div>
);
const FormDesigner = () => (
  <div className="w-[640px] h-[479px] bg-[#f0f0f0] border border-[#c8c8c8] relative text-black">
    <div className="h-[30px] bg-white flex items-center pl-[7px]">
      <CLogo s={17} />
      <span className="ml-[5px] text-[#7c7c7c]">Form1</span>
      <div className="ml-auto w-[11px] h-px bg-[#888] mr-[35px]" />
      <div className="w-[11px] h-[13px] border border-[#888] mr-[35px]" />
      <div className="mr-[17px]"><X c="#888" /></div>
    </div>
    <div className="absolute left-0 right-0 top-[30px] h-[447px] bg-white pl-[6px] pr-[8px]">
      <div className="h-full bg-[#f4f4f4] bg-[radial-gradient(#222222_0.5px,transparent_0.78px)] bg-[length:4px_4px]" />
    </div>
    <div className="absolute left-[43px] top-[62px] w-[173px] h-[273px] bg-white border border-[#808080]" />
    <div className="absolute left-[247px] top-[62px] w-[173px] h-[273px] bg-white border border-[#808080]" />
    <Tag n="0" cls="left-[45px] top-[64px]" />
    <span className="absolute left-[56px] top-[66px] leading-[15px]">emo1</span>
    <Tag n="1" cls="left-[249px] top-[64px]" />
    <span className="absolute left-[260px] top-[66px] leading-[15px]">emo1</span>
    <div className="absolute left-[476px] top-[75px] w-[73px] h-[23px] bg-[#e1e1e1] border border-[#adadad] flex items-center justify-center">Button1</div>
    <Tag n="2" cls="left-[475px] top-[74px]" />
    <Handle cls="left-[471px] top-[71px]" />
    <Handle cls="left-[508px] top-[71px]" />
    <Handle cls="left-[546px] top-[71px]" />
    <Handle cls="left-[471px] top-[83px]" />
    <Handle cls="left-[546px] top-[83px]" />
    <Handle cls="left-[471px] top-[96px]" />
    <Handle cls="left-[508px] top-[96px]" />
    <Handle cls="left-[546px] top-[96px]" />
  </div>
);

const Center = () => (
  <div className="w-[1140px] shrink-0 flex flex-col">
    <div className="h-[24px] shrink-0 bg-[#37414b] flex items-stretch relative">
      <div className="w-[89px] bg-[#2a72b8] flex items-center pl-[8px] text-[#e8eef4]">
        Unit1.cpp*<div className="ml-[6px] w-[7px] h-[7px] rounded-full bg-[#7aaede]" />
      </div>
      <div className="ml-auto mr-[3px] flex items-center"><Chev c="#fff" s={12} /></div>
      <div className="absolute left-0 right-0 bottom-0 h-[2px] bg-[#2a72b8]" />
    </div>
    <DesignBar />
    <div className="h-[2px] shrink-0 bg-[#9aa1a7]" />
    <div className="flex-1 bg-[#2b2d31] relative pl-[2px] pt-[2px] min-h-0">
      <FormDesigner />
      <div className="absolute right-0 bottom-0 w-[96px] h-[54px] border border-[#8b949c] bg-[#37414b]">
        <div className="w-[32px] h-[23px] border border-[#9aa1a7] bg-[#2b2d31]" />
      </div>
    </div>
    <div className="h-[24px] shrink-0 bg-[#37414b] flex items-start justify-end pr-[12px]">
      <div className="h-[20px] flex items-center">
        <span>Unit1.cpp</span>
        <div className="mx-[9px] w-px h-[14px] bg-[#6a747d]" />
        <span>Unit1.h</span>
        <div className="ml-[8px] w-[60px] h-full bg-[#2b2d31] flex items-center justify-center font-bold text-[#4f97d8]">Design</div>
        <span className="ml-[7px]">History</span>
      </div>
    </div>
  </div>
);

const Taskbar = () => (
  <div className="h-[30px] shrink-0 bg-[#1b2e40] flex items-center text-[#e8eaec]">
    <svg className="ml-[10px]" width="16" height="16" viewBox="0 0 16 16"><path d="M0 2.300 6.700 1.300V7.500H0zM7.500 1.200 16 0V7.500H7.500zM0 8.500h6.700v6.200L0 13.700zM7.500 8.500H16V16L7.500 14.800z" fill="#fff" /></svg>
    <svg className="ml-[24px]" width="18" height="18" viewBox="0 0 18 18" fill="none"><circle cx="10.500" cy="7.500" r="6" stroke="#2fb57a" strokeWidth="1.800" /><path d="M6 12 1 17" stroke="#2fb57a" strokeWidth="1.800" /></svg>
    <div className="ml-[21px] w-[160px] h-full bg-[#3c4c5c] border-b-[3px] border-[#76b9ed] flex items-center pl-[8px] pt-[3px] text-[13.400px] whitespace-nowrap">
      <CLogo /><span className="ml-[4px]">Project1 - C++Build...</span>
    </div>
    <div className="ml-[5px] w-[152px] h-full border-b-[3px] border-[#76b9ed] flex items-center pl-[4px] pt-[3px] text-[13.400px] whitespace-nowrap">
      <svg width="16" height="16" viewBox="0 0 16 16"><path d="M11.500 0 16 2v12l-4.500 2L4 9l-2.500 2L0 10V6l1.500-1L4 7zM11.500 4.500 7 8l4.500 3.500z" fill="#8d5cc8" /></svg>
      <span className="ml-[4px]">Project1 - Microsof...</span>
    </div>
    <svg className="ml-auto" width="13" height="8" viewBox="0 0 13 8" fill="none"><path d="M.5 7.500 6.500 1l6 6.500" stroke="#fff" strokeWidth="1.300" /></svg>
    <svg className="ml-[11px]" width="12" height="18" viewBox="0 0 12 18" fill="none"><rect x="3" y="0" width="6" height="11" rx="3" fill="#fff" /><path d="M1 7a5 5 0 0 0 10 0M6 12v3M2 16h8" stroke="#fff" /></svg>
    <svg className="ml-[14px]" width="14" height="14" viewBox="0 0 14 14" fill="none"><path d="M1 13A12 12 0 0 1 13 1M4 13a9 9 0 0 1 9-9M7 13a6 6 0 0 1 6-6M10 13a3 3 0 0 1 3-3" stroke="#e8eaec" /></svg>
    <svg className="ml-[6px]" width="16" height="14" viewBox="0 0 16 14" fill="none"><path d="M1 5h3l4-3.500v11L4 9H1zM10 4.500a3.500 3.500 0 0 1 0 5M12 3a6 6 0 0 1 0 8M14 1.500a8 8 0 0 1 0 11" stroke="#e8eaec" /></svg>
    <span className="ml-[10px] text-[12.6px]">ENG</span>
    <span className="ml-[12px] text-[12.6px]">21:52</span>
    <div className="ml-[7px] mr-[4px] w-px h-full bg-[#5b6875]" />
  </div>
);

export default function App() {
  return (
    <div className="w-[1920px] h-[1080px] flex flex-col overflow-hidden bg-[#4e5f6f] text-[#e4e6e8] text-[12px] leading-[16px] font-['Roboto','Noto_Sans_CJK_SC',sans-serif]">
      <TitleBar />
      <div className="h-[60px] shrink-0 bg-[#3a444e]">
        <MenuRow />
        <ToolRow />
      </div>
      <div className="flex-1 min-h-0 flex gap-[8px] p-[8px]">
        <div className="w-[364px] shrink-0 flex flex-col">
          <Structure />
          <Inspector />
        </div>
        <Center />
        <div className="w-[384px] shrink-0 flex flex-col">
          <ProjectsPanel />
          <Palette />
        </div>
      </div>
      <Taskbar />
    </div>
  );
}
